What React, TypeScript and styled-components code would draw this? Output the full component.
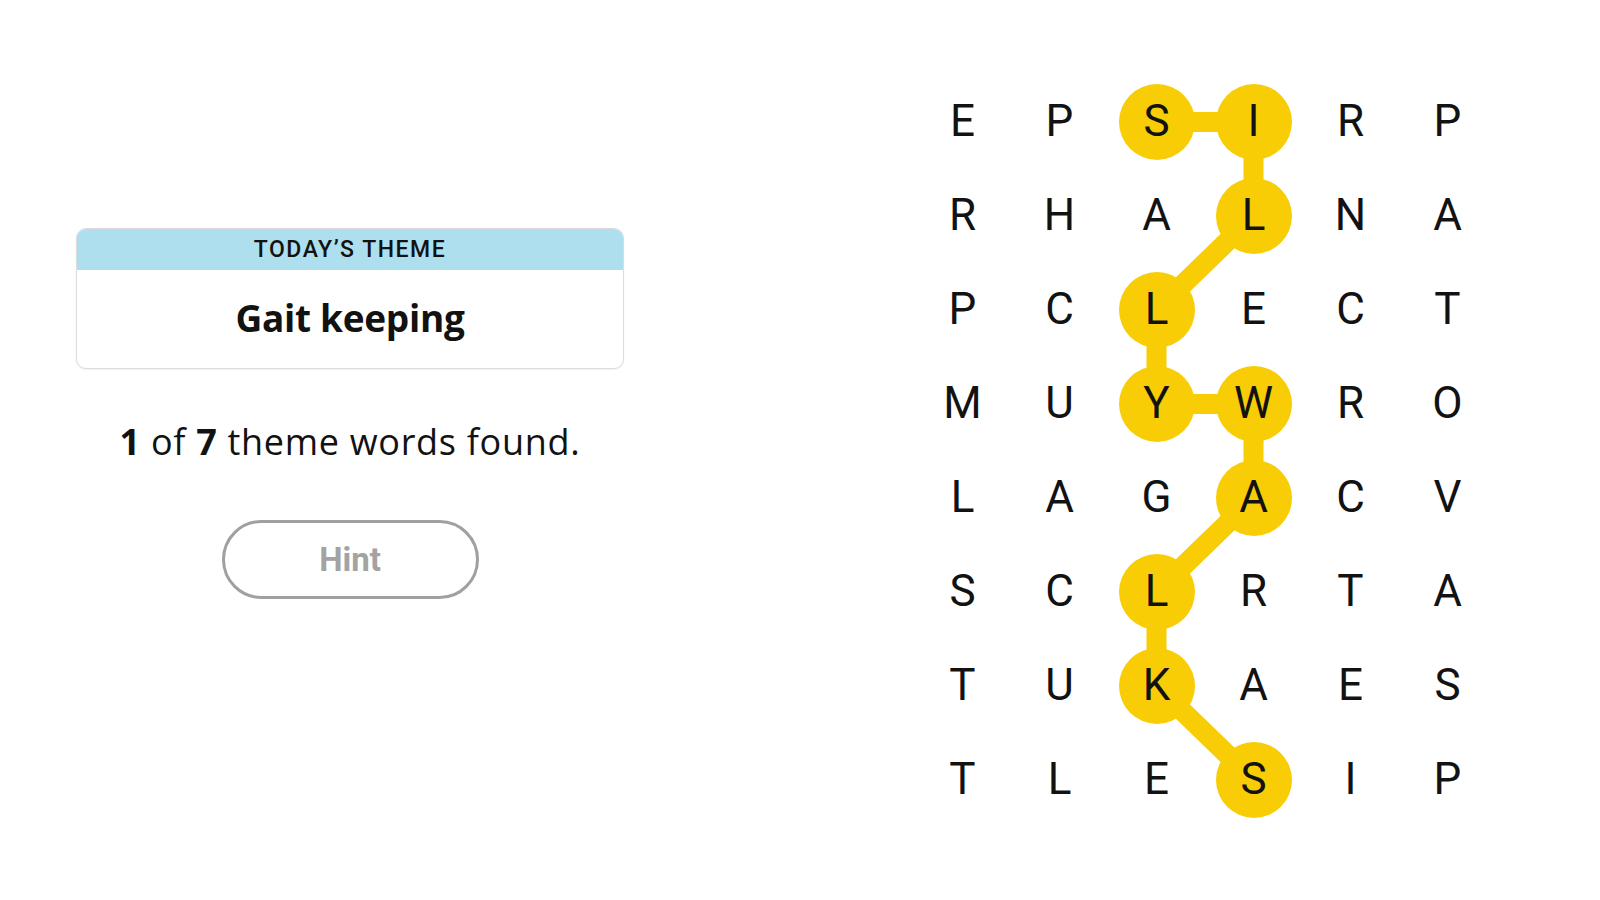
import { FC } from 'react'
import styled, { createGlobalStyle } from 'styled-components'

const ROWS = [
  'EPSIRP',
  'RHALNA',
  'PCLECT',
  'MUYWRO',
  'LAGACV',
  'SCLRTA',
  'TUKAES',
  'TLESIP',
]

// spangram SILLYWALKS, as [row, col]
const PATH: [number, number][] = [
  [0, 2],
  [0, 3],
  [1, 3],
  [2, 2],
  [3, 2],
  [3, 3],
  [4, 3],
  [5, 2],
  [6, 2],
  [7, 3],
]

const CELL_W = 97
const CELL_H = 94
const YELLOW = '#f8cd05'

const isOnPath = (r: number, c: number) =>
  PATH.some(([pr, pc]) => pr === r && pc === c)

const App: FC = () => {
  const points = PATH.map(
    ([r, c]) => `${c * CELL_W + CELL_W / 2},${r * CELL_H + CELL_H / 2}`
  ).join(' ')

  return (
    <>
      <GlobalStyle />
      <Page>
        <Side>
          <ThemeCard>
            <ThemeHeader>TODAY’S THEME</ThemeHeader>
            <ThemeBody>
              <ThemeTitle>Gait keeping</ThemeTitle>
            </ThemeBody>
          </ThemeCard>

          <Found>
            <b>1</b> of <b>7</b> theme words found.
          </Found>

          <HintButton disabled>Hint</HintButton>
        </Side>

        <Board>
          <Lines
            width={CELL_W * 6}
            height={CELL_H * 8}
            viewBox={`0 0 ${CELL_W * 6} ${CELL_H * 8}`}
          >
            <polyline
              points={points}
              fill="none"
              stroke={YELLOW}
              strokeWidth={20}
              strokeLinejoin="round"
            />
          </Lines>
          {ROWS.map((row, r) =>
            row.split('').map((ch, c) => (
              <Cell key={`${r}-${c}`}>
                <Letter $active={isOnPath(r, c)}>{ch}</Letter>
              </Cell>
            ))
          )}
        </Board>
      </Page>
    </>
  )
}

const GlobalStyle = createGlobalStyle`
  body {
    margin: 0;
    background: #fff;
    color: #121212;
    font-family: 'Open Sans', Roboto, sans-serif;
  }
`

const Page = styled.div`
  display: flex;
  align-items: flex-start;
  width: 1600px;
  height: 900px;
  overflow: hidden;
`

const Side = styled.div`
  display: flex;
  flex-direction: column;
  align-items: center;
  width: 548px;
  margin-left: 76px;
  padding-top: 228px;
`

const ThemeCard = styled.div`
  width: 100%;
  box-sizing: border-box;
  border: 1px solid #dcdcdc;
  border-radius: 10px;
  overflow: hidden;
  background: #fff;
  box-shadow: 0 1px 2px rgba(0, 0, 0, 0.06);
`

const ThemeHeader = styled.div`
  height: 41px;
  display: flex;
  align-items: center;
  justify-content: center;
  background: #aedfee;
  font-family: Roboto, sans-serif;
  font-weight: 500;
  font-size: 23px;
  letter-spacing: 1.5px;
  color: #121212;
`

const ThemeBody = styled.div`
  height: 98px;
  display: flex;
  align-items: center;
  justify-content: center;
  padding-bottom: 4px;
  box-sizing: border-box;
`

const ThemeTitle = styled.h2`
  margin: 0;
  font-family: 'Open Sans', sans-serif;
  font-weight: 700;
  font-size: 37px;
  letter-spacing: -0.3px;
  line-height: 1;
`

const Found = styled.p`
  margin: 51px 0 0;
  font-family: 'Open Sans', sans-serif;
  font-size: 36px;
  letter-spacing: 0.7px;
  line-height: 44px;
  white-space: nowrap;

  b {
    font-weight: 700;
  }
`

const HintButton = styled.button`
  margin-top: 56px;
  width: 257px;
  height: 79px;
  border: 3px solid #a0a0a0;
  border-radius: 40px;
  background: #fff;
  color: #a3a3a3;
  font-family: Roboto, sans-serif;
  font-weight: 700;
  font-size: 33px;
  cursor: default;
`

const Board = styled.div`
  position: relative;
  margin-left: 290px;
  margin-top: 75px;
  display: grid;
  grid-template-columns: repeat(6, ${CELL_W}px);
  grid-template-rows: repeat(8, ${CELL_H}px);
`

const Lines = styled.svg`
  position: absolute;
  left: 0;
  top: 0;
  pointer-events: none;
`

const Cell = styled.div`
  position: relative;
  display: flex;
  align-items: center;
  justify-content: center;
`

const Letter = styled.div<{ $active: boolean }>`
  width: 76px;
  height: 76px;
  border-radius: 50%;
  display: flex;
  align-items: center;
  justify-content: center;
  padding-bottom: 3px;
  box-sizing: border-box;
  background: ${({ $active }) => ($active ? YELLOW : 'transparent')};
  font-family: Roboto, sans-serif;
  font-size: 44px;
  line-height: 1;
  color: #121212;
`

export default App
